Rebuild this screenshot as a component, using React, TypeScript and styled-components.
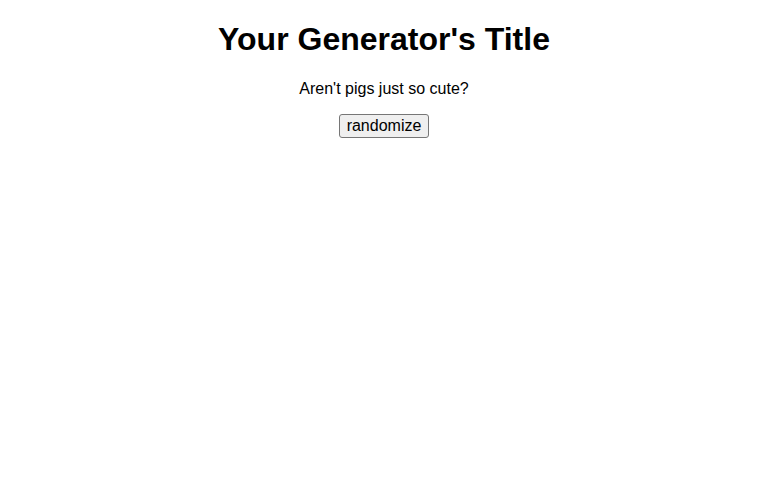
import React, { useState } from 'react';
import styled, { createGlobalStyle } from 'styled-components';

const GlobalStyle = createGlobalStyle`
  body {
    margin: 0;
    font-family: "Liberation Sans", Arial, sans-serif;
    color: #000;
    background: #fff;
  }
`

const Container = styled.div`
  text-align: center;
`
const Title = styled.h1`
  font-size: 32px;
  font-weight: 700;
  margin: 21.44px 0;
`
const Caption = styled.p`
  font-size: 16px;
  margin: 16px 0;
`
const Button = styled.button`
  font-family: "Liberation Sans", Arial, sans-serif;
  font-size: 16px;
  color: #000;
  background-color: #efefef;
  border: 1px solid #767676;
  border-radius: 3px;
  padding: 2px 7px;
  cursor: pointer;
`

const captions = [
  "Aren't pigs just so cute?",
  "Pigs love rolling in the mud.",
  "A pig's snout is very sensitive.",
]

const App = () => {
  const [index, setIndex] = useState(0)
  return (
    <Container>
      <GlobalStyle />
      <Title>Your Generator's Title</Title>
      <Caption>{captions[index]}</Caption>
      <Button onClick={() => setIndex((index + 1) % captions.length)}>randomize</Button>
    </Container>
  );
};

export default App;
